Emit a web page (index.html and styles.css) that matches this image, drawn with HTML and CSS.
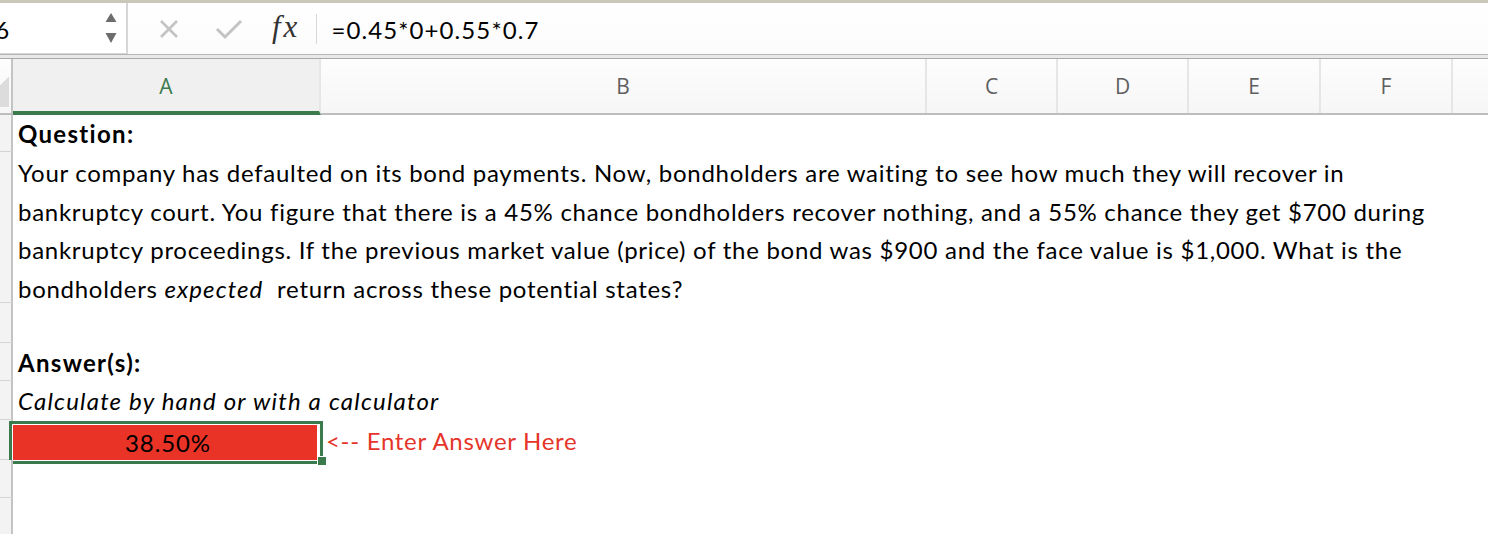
FILE: index.html
```html
<!DOCTYPE html>
<html lang="en">
<head>
    <meta charset="UTF-8">
    <title>Bond recovery question</title>
    <link rel="stylesheet" href="styles.css">
</head>
<body>
    <!-- Formula bar -->
    <div class="formulaBar">
        <div class="nameBox">
            <span class="nameText">A6</span>
            <div class="spinner">
                <svg width="12" height="32" viewBox="0 0 12 32">
                    <path d="M6 1 L11.5 10 L0.5 10 Z" fill="#6d6d6d"/>
                    <path d="M0.5 21 L11.5 21 L6 31 Z" fill="#6d6d6d"/>
                </svg>
            </div>
        </div>
        <div class="barIcons">
            <svg class="icon cross" width="22" height="22" viewBox="0 0 22 22">
                <path d="M3 3 L19 19 M19 3 L3 19" stroke="#c3c3c3" stroke-width="2.6" fill="none"/>
            </svg>
            <svg class="icon check" width="28" height="22" viewBox="0 0 28 22">
                <path d="M2 11 L10 19 L26 3" stroke="#c3c3c3" stroke-width="3" fill="none"/>
            </svg>
            <span class="fx">fx</span>
            <span class="divider"></span>
        </div>
        <div class="formulaText">=0.45*0+0.55*0.7</div>
    </div>
    <div class="barEdge"></div>

    <!-- Column headers -->
    <div class="colHeaders">
        <div class="corner"><div class="cornerMark"></div></div>
        <div class="colHead selected" style="width: 308px">A</div>
        <div class="colHead" style="width: 606px">B</div>
        <div class="colHead" style="width: 131px">C</div>
        <div class="colHead" style="width: 131px">D</div>
        <div class="colHead" style="width: 132px">E</div>
        <div class="colHead" style="width: 132px">F</div>
        <div class="colHead last">&nbsp;</div>
    </div>

    <!-- Sheet rows -->
    <div class="sheet">
        <div class="row r1">
            <div class="rowHead"></div>
            <div class="cell bold">Question:</div>
        </div>
        <div class="row r2">
            <div class="rowHead"></div>
            <div class="cell para">
                <div class="line">Your company has defaulted on its bond payments. Now, bondholders are waiting to see how much they will recover in</div>
                <div class="line">bankruptcy court. You figure that there is a 45% chance bondholders recover nothing, and a 55% chance they get $700 during</div>
                <div class="line">bankruptcy proceedings. If the previous market value (price) of the bond was $900 and the face value is $1,000. What is the</div>
                <div class="line">bondholders <em>expected</em>&nbsp; return across these potential states?</div>
            </div>
        </div>
        <div class="row r3">
            <div class="rowHead"></div>
            <div class="cell"></div>
        </div>
        <div class="row r4">
            <div class="rowHead"></div>
            <div class="cell bold">Answer(s):</div>
        </div>
        <div class="row r5">
            <div class="rowHead"></div>
            <div class="cell italic">Calculate by hand or with a calculator</div>
        </div>
        <div class="row r6">
            <div class="rowHead"></div>
            <div class="answerBox">
                <div class="answerFill">38.50%</div>
                <div class="fillHandle"></div>
            </div>
            <div class="hint">&lt;-- Enter Answer Here</div>
        </div>
        <div class="row r7">
            <div class="rowHead"></div>
            <div class="cell"></div>
        </div>
        <div class="row r8">
            <div class="rowHead"></div>
            <div class="cell"></div>
        </div>
    </div>
</body>
</html>
```

FILE: styles.css
```css
/* Page */
body {
    margin: 0;
    width: 1488px;
    height: 534px;
    overflow: hidden;
    background: #ffffff;
    font-family: Lato, "Open Sans", sans-serif;
    color: #000;
}

/* Formula bar */
.formulaBar {
    display: flex;
    align-items: stretch;
    height: 51px;
    border-top: 3px solid #cbc7b8;
    background: linear-gradient(#ffffff, #fbfbfb);
}

.nameBox {
    width: 126px;
    display: flex;
    align-items: center;
    justify-content: space-between;
    border-right: 2px solid #d6d6d6;
    border-bottom: 1px solid #d6d6d6;
    overflow: hidden;
    background: #fff;
}

.nameText {
    font-size: 24px;
    margin-left: -21px;
    margin-top: 2px;
}

.spinner {
    display: flex;
    margin-right: 9px;
    margin-top: -1px;
}

.barIcons {
    display: flex;
    align-items: center;
    padding-left: 30px;
}

.cross {
    margin-right: 35px;
}

.check {
    margin-right: 29px;
}

.fx {
    font-family: "Liberation Serif", serif;
    font-style: italic;
    font-size: 31px;
    letter-spacing: 3px;
    color: #333;
    margin-top: -3px;
}

.divider {
    width: 1px;
    height: 30px;
    background: #d8d8d8;
    margin-left: 16px;
}

.formulaText {
    display: flex;
    align-items: center;
    padding-left: 14px;
    font-size: 24px;
    letter-spacing: 1.1px;
    margin-top: 2px;
}

.barEdge {
    height: 3px;
    border-top: 1px solid #b5b5b5;
    border-bottom: 1px solid #a9a9a9;
    background: #e9e9e9;
}

/* Column header row */
.colHeaders {
    display: flex;
    height: 54px;
    border-bottom: 2px solid #bdbdbd;
    background: linear-gradient(#fdfdfd, #f6f6f6);
}

.corner {
    width: 11px;
    border-right: 2px solid #c4c4c4;
    padding-top: 6px;
    box-sizing: content-box;
}

.cornerMark {
    width: 9px;
    height: 42px;
    background: linear-gradient(135deg, transparent 40%, #dcdcdc 40%);
}

.colHead {
    display: flex;
    align-items: center;
    justify-content: center;
    border-right: 2px solid #e6e6e6;
    font-family: "Open Sans", sans-serif;
    font-size: 21px;
    color: #5f5f5f;
    box-sizing: border-box;
}

.colHead.selected {
    background: #f0f0f0;
    color: #3a7a4c;
    border-bottom: 4px solid #3a7a4c;
    margin-bottom: -2px;
    padding-top: 2px;
}

.colHead.last {
    flex: 1;
    border-right: none;
}

/* Rows */
.row {
    display: flex;
    align-items: stretch;
}

.rowHead {
    width: 11px;
    flex-shrink: 0;
    background: #f3f3f3;
    border-right: 2px solid #c4c4c4;
    border-bottom: 1px solid #d4d4d4;
    box-sizing: content-box;
}

.r1 { height: 37px; }
.r2 { height: 151px; }
.r3 { height: 40px; }
.r4 { height: 38px; }
.r5 { height: 39px; }
.r6 { height: 40px; }
.r7 { height: 38px; }
.r8 { height: 38px; }

.cell {
    display: flex;
    align-items: center;
    padding-left: 5px;
    font-size: 24px;
    letter-spacing: 0.72px;
    white-space: nowrap;
}

.bold {
    font-weight: bold;
    letter-spacing: 1.3px;
}

.italic {
    font-style: italic;
    letter-spacing: 1.2px;
}

.para {
    flex-direction: column;
    align-items: flex-start;
    justify-content: flex-start;
    padding-top: 2px;
}

.para em {
    letter-spacing: 1.1px;
}

.line {
    height: 38.5px;
    line-height: 38.5px;
}

/* Answer cell */
.answerBox {
    width: 306px;
    height: 35px;
    margin-left: -4px;
    margin-top: 1px;
    border: 3px solid #3a7a4c;
    padding: 1px;
    background: #fff;
    display: flex;
    align-items: flex-end;
}

.answerFill {
    width: 100%;
    height: 100%;
    background: #e83326;
    display: flex;
    align-items: center;
    justify-content: center;
    font-size: 24px;
    letter-spacing: 0.9px;
    padding-left: 6px;
    box-sizing: border-box;
}

.fillHandle {
    width: 8px;
    height: 8px;
    flex-shrink: 0;
    background: #3a7a4c;
    border: 1px solid #fff;
    margin-right: -8px;
    margin-bottom: -6px;
}

.hint {
    display: flex;
    align-items: center;
    padding-left: 3px;
    font-size: 24px;
    letter-spacing: 0.7px;
    color: #e5352b;
    white-space: nowrap;
}
```
